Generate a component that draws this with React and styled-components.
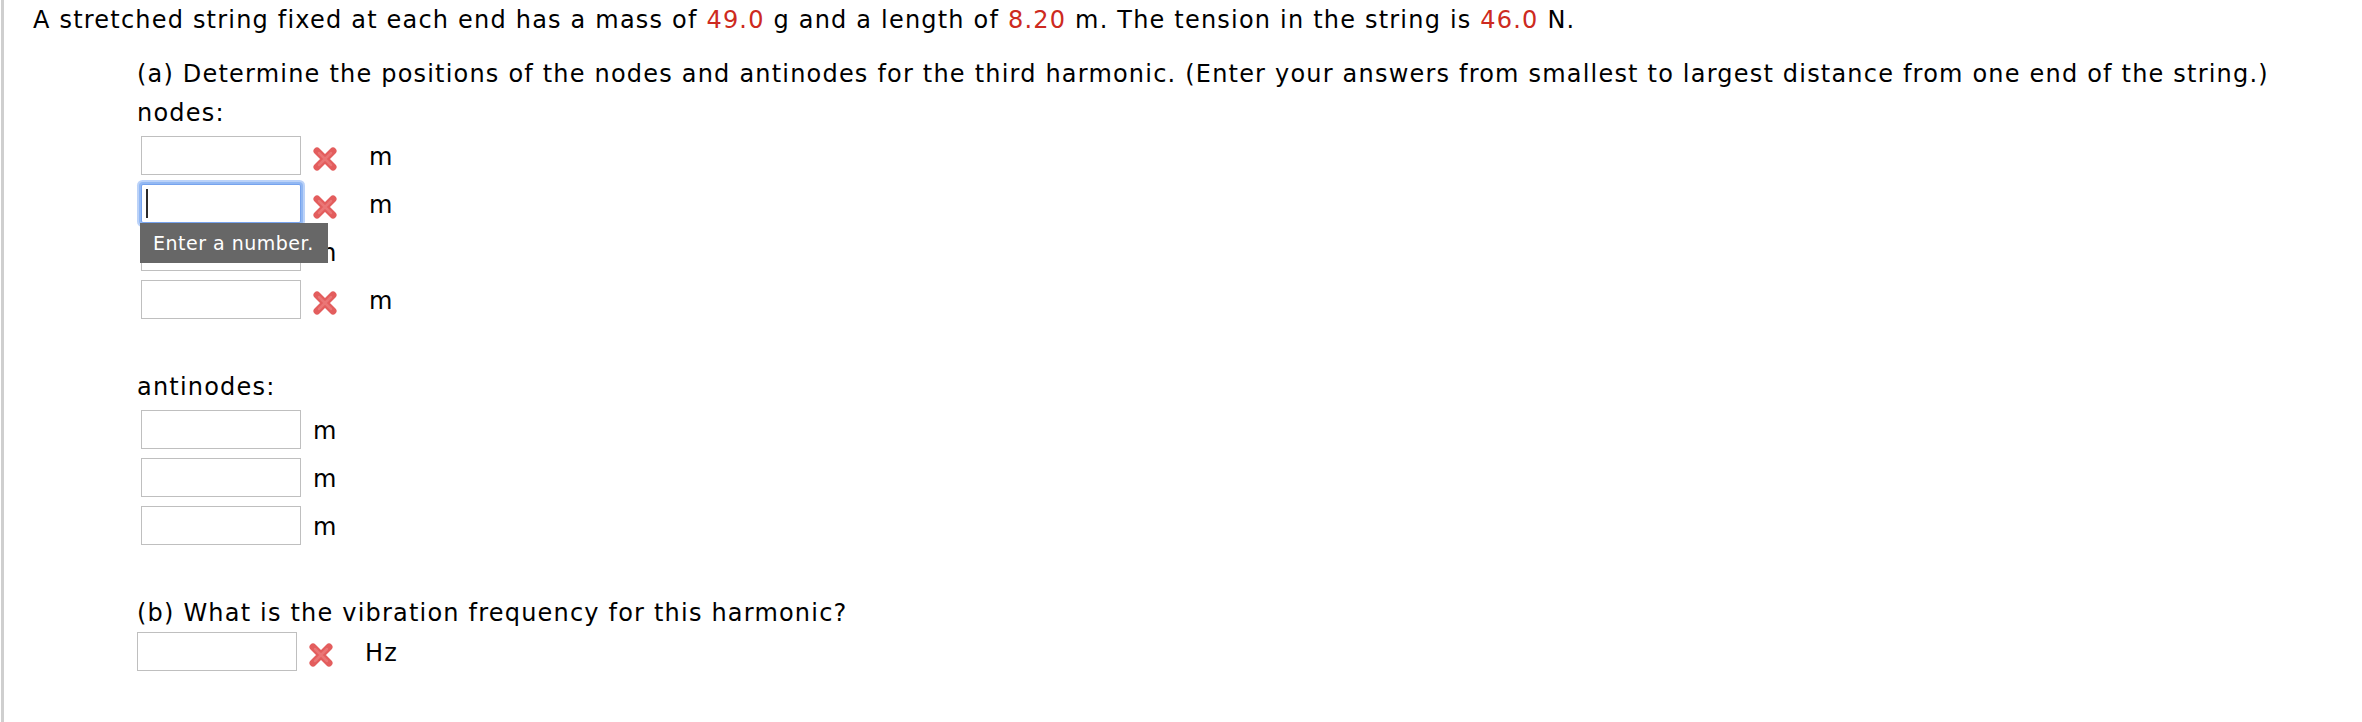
import React from 'react';
import styled, { createGlobalStyle } from 'styled-components';

const GlobalStyle = createGlobalStyle`
  html, body {
    margin: 0;
    padding: 0;
    background: #ffffff;
  }
  body {
    font-family: 'DejaVu Sans', Verdana, sans-serif;
  }
`;

const Page = styled.div`
  box-sizing: border-box;
  min-height: 722px;
  margin-left: 1px;
  border-left: 3px solid #cfcfcf;
  padding: 3px 0 0 29px;
  font-size: 24px;
  line-height: 34px;
  letter-spacing: 1.2px;
  color: #000;
`;

const Statement = styled.p`
  margin: 0;
`;

const Value = styled.span`
  color: #cd2a20;
`;

const Part = styled.div`
  padding-left: 104px;
  margin-top: ${(p) => p.$top}px;
`;

const Label = styled.div`
  margin-top: ${(p) => p.$top || 0}px;
`;

const FieldList = styled.div`
  display: flex;
  flex-direction: column;
  gap: 9px;
  margin-top: ${(p) => p.$top}px;
`;

const Row = styled.div`
  position: relative;
  display: flex;
  align-items: center;
  height: 39px;
  padding-left: ${(p) => p.$indent}px;
`;

const NumberInput = styled.input`
  box-sizing: border-box;
  width: 160px;
  height: 39px;
  margin: 0;
  padding: 0 6px;
  border: 1px solid ${(p) => (p.$focused ? '#76a3ee' : '#bfbfbf')};
  border-radius: ${(p) => (p.$focused ? '2px' : '0')};
  box-shadow: ${(p) =>
    p.$focused ? '0 0 0 2px #92b8f3, 0 0 0 4px rgba(150, 186, 245, 0.65)' : 'none'};
  outline: none;
  background: #fff;
  font: inherit;
`;

const InputWrap = styled.span`
  position: relative;
  display: inline-flex;
`;

const Caret = styled.span`
  position: absolute;
  left: 5px;
  top: 5px;
  width: 2px;
  height: 29px;
  background: #2b2b2b;
`;

const Mark = styled.svg`
  flex: none;
  width: 26px;
  height: 26px;
  margin: 6px 31px 0 11px;
`;

const Unit = styled.span`
  margin-left: ${(p) => (p.$plain ? 12 : 0)}px;
  padding-top: 2px;
`;

const Tooltip = styled.div`
  position: absolute;
  left: 3px;
  top: 39px;
  z-index: 2;
  box-sizing: border-box;
  width: 188px;
  height: 40px;
  padding-left: 13px;
  background: #676767;
  color: #fff;
  font-size: 19px;
  line-height: 40px;
  letter-spacing: 0.5px;
  white-space: nowrap;
`;

const WrongMark = () => (
  <Mark viewBox="0 0 26 26">
    <defs>
      <filter id="soft" x="-20%" y="-20%" width="140%" height="140%">
        <feGaussianBlur stdDeviation="0.5" />
      </filter>
    </defs>
    <g strokeLinecap="round" fill="none" filter="url(#soft)">
      <path d="M5 5 L21 21 M21 5 L5 21" stroke="#e35d5d" strokeWidth="7" />
      <path d="M7 7 L19 19 M19 7 L7 19" stroke="#f08a8a" strokeWidth="2.5" opacity="0.55" />
    </g>
  </Mark>
);

const Field = ({ unit, wrong, indent = 4, focused, tip }) => (
  <Row $indent={indent}>
    {focused ? (
      <InputWrap>
        <NumberInput type="text" readOnly $focused />
        <Caret />
      </InputWrap>
    ) : (
      <NumberInput type="text" readOnly />
    )}
    {wrong && <WrongMark />}
    <Unit $plain={!wrong}>{unit}</Unit>
    {tip && <Tooltip>{tip}</Tooltip>}
  </Row>
);

const App = () => (
  <>
    <GlobalStyle />
    <Page>
      <Statement>
        A stretched string fixed at each end has a mass of <Value>49.0</Value> g and a
        length of <Value>8.20</Value> m. The tension in the string is <Value>46.0</Value> N.
      </Statement>

      <Part $top={20}>
        <Label>
          (a) Determine the positions of the nodes and antinodes for the third harmonic.
          (Enter your answers from smallest to largest distance from one end of the string.)
        </Label>
        <Label $top={5}>nodes:</Label>
        <FieldList $top={6}>
          <Field unit="m" wrong />
          <Field unit="m" wrong focused tip="Enter a number." />
          <Field unit="m" />
          <Field unit="m" wrong />
        </FieldList>

        <Label $top={51}>antinodes:</Label>
        <FieldList $top={6}>
          <Field unit="m" />
          <Field unit="m" />
          <Field unit="m" />
        </FieldList>
      </Part>

      <Part $top={51}>
        <Label>(b) What is the vibration frequency for this harmonic?</Label>
        <FieldList $top={2}>
          <Field unit="Hz" wrong indent={0} />
        </FieldList>
      </Part>
    </Page>
  </>
);

export default App;
